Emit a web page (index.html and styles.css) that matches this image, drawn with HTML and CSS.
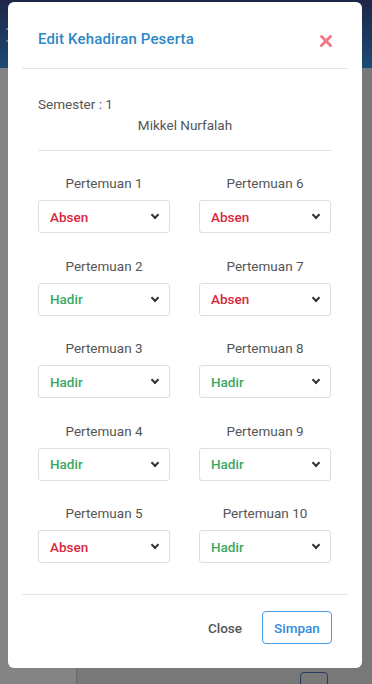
FILE: index.html
```html
<!DOCTYPE html>
<html lang="id">
<head>
<meta charset="utf-8">
<title>Edit Kehadiran Peserta</title>
<link rel="stylesheet" href="styles.css">
</head>
<body>
<div class="page">
  <header class="topbar">
    <span class="menu-dots"></span>
  </header>
  <div class="content">
    <aside class="sidebar"></aside>
    <main class="main">
      <span class="edit-btn"></span>
    </main>
  </div>
</div>

<div class="backdrop">
  <div class="modal">
    <div class="modal-header">
      <h2 class="modal-title">Edit Kehadiran Peserta</h2>
      <button class="close-x" aria-label="Tutup">
        <svg width="14" height="14" viewBox="0 0 14 14"><path d="M2.5 2.5 L11.5 11.5 M11.5 2.5 L2.5 11.5" stroke="#ef7a86" stroke-width="3" stroke-linecap="round" fill="none"/></svg>
      </button>
    </div>
    <div class="modal-body">
      <div class="semester">Semester : 1</div>
      <div class="name">Mikkel Nurfalah</div>
      <div class="grid">
        <div class="field"><div class="label">Pertemuan 1</div><div class="select absen">Absen<span class="chev"></span></div></div>
        <div class="field"><div class="label">Pertemuan 6</div><div class="select absen">Absen<span class="chev"></span></div></div>
        <div class="field"><div class="label">Pertemuan 2</div><div class="select hadir">Hadir<span class="chev"></span></div></div>
        <div class="field"><div class="label">Pertemuan 7</div><div class="select absen">Absen<span class="chev"></span></div></div>
        <div class="field"><div class="label">Pertemuan 3</div><div class="select hadir">Hadir<span class="chev"></span></div></div>
        <div class="field"><div class="label">Pertemuan 8</div><div class="select hadir">Hadir<span class="chev"></span></div></div>
        <div class="field"><div class="label">Pertemuan 4</div><div class="select hadir">Hadir<span class="chev"></span></div></div>
        <div class="field"><div class="label">Pertemuan 9</div><div class="select hadir">Hadir<span class="chev"></span></div></div>
        <div class="field"><div class="label">Pertemuan 5</div><div class="select absen">Absen<span class="chev"></span></div></div>
        <div class="field"><div class="label">Pertemuan 10</div><div class="select hadir">Hadir<span class="chev"></span></div></div>
      </div>
    </div>
    <div class="modal-footer">
      <button class="btn-close">Close</button>
      <button class="btn-save">Simpan</button>
    </div>
  </div>
</div>
</body>
</html>
```
FILE: styles.css
```css
* { box-sizing: border-box; }
html, body { margin: 0; padding: 0; }
body {
  width: 372px;
  height: 684px;
  overflow: hidden;
  font-family: Roboto, "Liberation Sans", Arial, sans-serif;
  background: #7b7b7b;
  position: relative;
}
.page { display: flex; flex-direction: column; height: 684px; }
.topbar {
  height: 68px;
  background: linear-gradient(180deg, #1d2747 0%, #1c3b63 60%, #1b4c74 100%);
  position: relative;
}
.menu-dots {
  position: absolute;
  left: 6px;
  top: 28px;
  width: 4px;
  height: 14px;
  border-top: 2px solid #5d7696;
  border-bottom: 2px solid #5d7696;
}
.content { flex: 1; display: flex; }
.sidebar { width: 77px; background: #848484; border-right: 1px solid #6c6c6c; }
.main { flex: 1; background: #787878; position: relative; }
.edit-btn {
  position: absolute;
  left: 223px;
  top: 604px;
  width: 28px;
  height: 26px;
  border: 1.5px solid #2a3c5c;
  border-radius: 4px;
}
.backdrop { position: absolute; inset: 0; }
.modal {
  position: absolute;
  left: 8px;
  top: 2px;
  width: 354px;
  height: 666px;
  background: #fff;
  border-radius: 6px;
  display: flex;
  flex-direction: column;
}
.modal-header {
  margin: 0 14px;
  padding: 27px 16px 19px;
  border-bottom: 1px solid #e4e4e4;
  display: flex;
  align-items: center;
  justify-content: space-between;
}
.modal-title {
  margin: 0;
  font-size: 15px;
  letter-spacing: 0.15px;
  line-height: 20px;
  font-weight: 500;
  color: #2c88c6;
}
.close-x {
  border: 0;
  background: none;
  padding: 0;
  margin-top: 4px;
  margin-right: -1px;
  width: 14px;
  height: 14px;
  display: flex;
}
.modal-body { padding: 27px 30px 31px; }
.semester { font-size: 13.5px; line-height: 16px; color: #555; }
.name {
  font-size: 13.5px;
  line-height: 16px;
  color: #555;
  text-align: center;
  margin-top: 5px;
  padding-bottom: 17px;
  border-bottom: 1px solid #e4e4e4;
}
.grid {
  margin-top: 22px;
  display: grid;
  grid-template-columns: 132px 132px;
  column-gap: 29px;
  row-gap: 22.5px;
}
.label {
  text-align: center;
  font-size: 13.5px;
  line-height: 20px;
  color: #555;
  margin-bottom: 7px;
}
.select {
  height: 33px;
  border: 1px solid #dedede;
  border-radius: 3px;
  padding: 0 11px;
  display: flex;
  align-items: center;
  justify-content: space-between;
  font-size: 13.5px;
  font-weight: 500;
}
.absen { color: #d8273b; }
.hadir { color: #3aa862; }
.chev {
  width: 6px;
  height: 6px;
  border-right: 2px solid #333;
  border-bottom: 2px solid #333;
  transform: rotate(45deg);
  margin-top: -3px;
  margin-right: 0;
}
.modal-footer {
  margin: 0 14px;
  border-top: 1px solid #e4e4e4;
  padding: 16px 16px 0;
  display: flex;
  justify-content: flex-end;
  align-items: center;
  gap: 8px;
}
.btn-close {
  border: 0;
  background: none;
  font-family: inherit;
  font-size: 13.5px;
  font-weight: 500;
  color: #555;
  padding: 0 12px;
  height: 32px;
}
.btn-save {
  font-family: inherit;
  font-size: 13.5px;
  font-weight: 500;
  color: #2f8be0;
  background: #fff;
  border: 1px solid #4b9be6;
  border-radius: 4px;
  width: 70px;
  height: 33px;
  padding: 0;
}
```
